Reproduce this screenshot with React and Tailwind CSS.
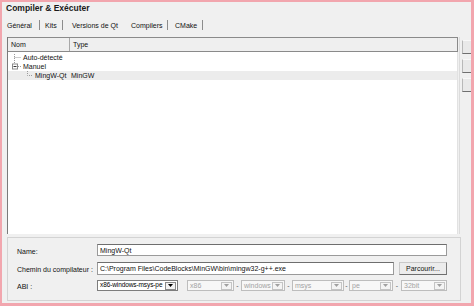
const TABS = [
  { label: 'Général', w: 'w-[37px]', pl: 'pl-[4px]', sep: true },
  { label: 'Kits', w: 'w-[23px]', pl: 'pl-[5px]', sep: true },
  { label: 'Versions de Qt', w: 'w-[60px]', pl: 'pl-[9px]', sep: false },
  { label: 'Compilers', w: 'w-[45px]', pl: 'pl-[8px]', sep: true },
  { label: 'CMake', w: 'w-[35px]', pl: 'pl-[7px]', sep: true },
];

function Arrow({ disabled }) {
  return (
    <span
      className={`shrink-0 w-[11px] h-[8px] mr-[1px] flex items-center justify-center border ${
        disabled ? 'border-[#c4c4c4] bg-[#f4f4f4]' : 'border-[#8a8a8a] bg-[#f2f2f2]'
      }`}
    >
      <svg width="5" height="3" viewBox="0 0 5 3">
        <path d="M0 0h5L2.5 3z" fill={disabled ? '#a0a0a0' : '#000'} />
      </svg>
    </span>
  );
}

function Combo({ text, w, disabled, tight }) {
  return (
    <div
      className={`${w} h-[11px] shrink-0 flex items-center border ${
        disabled ? 'border-[#bdbdbd] bg-[#f7f7f7] text-[#a3a3a3]' : 'border-[#7d7d7d] bg-white text-black'
      }`}
    >
      <span className={`flex-1 min-w-0 pl-[2px] whitespace-nowrap ${tight ? 'text-[6.5px] tracking-[-0.1px]' : ''}`}>
        {text}
      </span>
      <Arrow disabled={disabled} />
    </div>
  );
}

function Dash({ w }) {
  return <span className={`${w} shrink-0 text-center text-[#555]`}>-</span>;
}

export default function App() {
  return (
    <div className="w-[474px] h-[306px] bg-[#f2a6ae] pt-[2px] pl-[2px] pr-[3px] pb-[3px] font-['Liberation_Sans',Arial,sans-serif] text-[7px] leading-none text-[#111]">
      <div className="h-full bg-[#f0f0f0] overflow-hidden flex flex-col">
        {/* Title */}
        <div className="h-[13px] pl-[4px] pt-[2px] text-[8.5px] font-bold text-[#1a1a1a]">
          Compiler &amp; Exécuter
        </div>

        {/* Tabs */}
        <div className="mt-[5px] h-[10px] pl-[1px] flex">
          {TABS.map((t) => (
            <div
              key={t.label}
              className={`${t.w} ${t.pl} shrink-0 h-full flex items-center whitespace-nowrap ${
                t.sep ? 'border-r border-[#8c8c8c]' : ''
              }`}
            >
              {t.label}
            </div>
          ))}
        </div>

        {/* Tree + side buttons */}
        <div className="mt-[7px] h-[197px] flex">
          <div className="ml-[5px] w-[451px] h-full shrink-0 flex flex-col border-l border-[#7a7a7a]">
            <div className="h-[15px] flex bg-[#efefef] border-t border-r border-b border-[#8a8a8a]">
              <div className="w-[62px] h-full pl-[3px] flex items-center border-r border-[#a8a8a8]">Nom</div>
              <div className="flex-1 pl-[3px] flex items-center">Type</div>
            </div>
            <div className="flex-1 bg-white border-r border-[#e2e2e2] pt-[1px]">
              <div className="h-[9px] flex items-center">
                <svg width="15" height="9" viewBox="0 0 15 9" className="shrink-0">
                  <path d="M6.5 1V9M6.5 4.5H13" fill="none" stroke="#9a9a9a" strokeDasharray="1 1" />
                </svg>
                <span>Auto-détecté</span>
              </div>
              <div className="h-[9px] flex items-center">
                <svg width="15" height="9" viewBox="0 0 15 9" className="shrink-0">
                  <rect x="4.5" y="2" width="5" height="5" fill="#fff" stroke="#8a8a8a" />
                  <path d="M5.5 4.5h3" fill="none" stroke="#333" />
                  <path d="M6.5 0V2M10 4.5H13" fill="none" stroke="#9a9a9a" strokeDasharray="1 1" />
                </svg>
                <span>Manuel</span>
              </div>
              <div className="h-[9px] flex items-center bg-[#ececec]">
                <svg width="27" height="9" viewBox="0 0 27 9" className="shrink-0">
                  <path d="M19.5 0V4.5H25" fill="none" stroke="#9a9a9a" strokeDasharray="1 1" />
                </svg>
                <span className="w-[36px]">MingW-Qt</span>
                <span>MinGW</span>
              </div>
            </div>
          </div>

          <div className="ml-[1px] flex-1 border-l border-[#dcdcdc] pl-[2px] pt-[3px] flex flex-col gap-[5px]">
            <div className="w-[30px] h-[14px] bg-[#e9e9e9] border-l border-t border-b border-l-[#b8b8b8] border-t-[#f8f8f8] border-b-[#6f6f6f]" />
            <div className="w-[30px] h-[14px] bg-[#e9e9e9] border-l border-t border-b border-l-[#b8b8b8] border-t-[#f8f8f8] border-b-[#6f6f6f]" />
            <div className="w-[30px] h-[14px] bg-[#e9e9e9] border-l border-t border-b border-l-[#b8b8b8] border-t-[#f8f8f8] border-b-[#6f6f6f]" />
          </div>
        </div>

        {/* Details group */}
        <div className="mt-[3px] ml-[5px] w-[454px] h-[64px] border border-[#d3d3d3] pt-[6px] pl-[9px] flex flex-col">
          <div className="h-[12px] flex items-center">
            <span className="w-[80px] shrink-0 pt-[2px]">Name:</span>
            <div className="w-[350px] h-full flex items-center bg-white border border-[#9a9a9a] border-t-[#6e6e6e] pl-[2px]">
              MingW-Qt
            </div>
          </div>

          <div className="mt-[6px] h-[13px] flex items-center">
            <span className="w-[80px] shrink-0 pt-[2px] whitespace-nowrap">Chemin du compilateur :</span>
            <div className="w-[297px] h-full flex items-center bg-white border border-[#9a9a9a] border-t-[#6e6e6e] pl-[2px] whitespace-nowrap overflow-hidden">
              C:\Program Files\CodeBlocks\MinGW\bin\mingw32-g++.exe
            </div>
            <button className="ml-[5px] w-[48px] h-full flex items-center justify-center bg-[#ececec] border border-[#c9c9c9] border-r-[#7a7a7a] border-b-[#6e6e6e]">
              Parcourir...
            </button>
          </div>

          <div className="mt-[5px] h-[11px] flex items-center">
            <span className="w-[80px] shrink-0 pt-[1px]">ABI :</span>
            <Combo text="x86-windows-msys-pe" w="w-[81px]" tight />
            <span className="w-[9px] shrink-0" />
            <Combo text="x86" w="w-[47px]" disabled />
            <Dash w="w-[7px]" />
            <Combo text="windows" w="w-[44px]" disabled />
            <Dash w="w-[7px]" />
            <Combo text="msys" w="w-[52px]" disabled />
            <Dash w="w-[5px]" />
            <Combo text="pe" w="w-[44px]" disabled />
            <Dash w="w-[8px]" />
            <Combo text="32bit" w="w-[46px]" disabled />
          </div>
        </div>
      </div>
    </div>
  );
}
